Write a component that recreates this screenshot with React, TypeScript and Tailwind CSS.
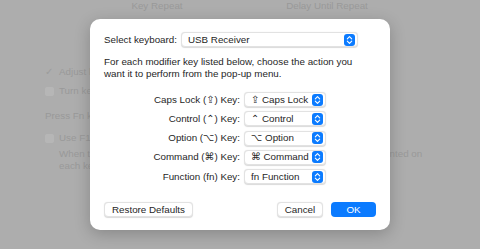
import React from 'react';

const font = { fontFamily: '"Liberation Sans", "DejaVu Sans", sans-serif' };

function Stepper({ h = 12 }: { h?: number }) {
  return (
    <svg width="11" height={h} viewBox={`0 0 11 ${h}`} className="shrink-0">
      <rect x="0" y="0" width="11" height={h} rx="3" fill="#0b7bff" />
      <path
        d={`M3.3 ${h / 2 - 1.2} L5.5 ${h / 2 - 3.4} L7.7 ${h / 2 - 1.2} M3.3 ${h / 2 + 1.2} L5.5 ${h / 2 + 3.4} L7.7 ${h / 2 + 1.2}`}
        fill="none"
        stroke="white"
        strokeWidth="1.1"
        strokeLinecap="round"
        strokeLinejoin="round"
      />
    </svg>
  );
}

function Popup({ label, width }: { label: string; width: string }) {
  return (
    <div
      className={`${width} h-[15px] flex items-center justify-between pl-[6px] pr-[2px] bg-white rounded-[4px] border border-[#e2e2e2] shadow-[0_0.5px_1px_rgba(0,0,0,0.15)] text-[#262626]`}
    >
      <span className="leading-[12px]">{label}</span>
      <Stepper />
    </div>
  );
}

const modifiers = [
  { key: 'Caps Lock (⇪) Key:', value: '⇪ Caps Lock' },
  { key: 'Control (⌃) Key:', value: '⌃ Control' },
  { key: 'Option (⌥) Key:', value: '⌥ Option' },
  { key: 'Command (⌘) Key:', value: '⌘ Command' },
  { key: 'Function (fn) Key:', value: 'fn Function' },
];

export default function App() {
  return (
    <div
      className="relative w-[480px] h-[249px] overflow-hidden bg-[#adadad] text-[9.8px] leading-[12px] text-[#999999]"
      style={font}
    >
      {/* dimmed settings window behind the sheet */}
      <div className="flex pt-[0px] pl-[97px] gap-[50px]">
        <div className="w-[120px] text-center">Key Repeat</div>
        <div className="w-[120px] text-center">Delay Until Repeat</div>
      </div>
      <div className="flex flex-col pl-[45px] pt-[53px]">
        <div className="flex items-center gap-[5px] h-[14px]">
          <span className="w-[9px] text-[10px] text-[#9c9c9c]">✓</span>
          <span>Adjust keyboard brightness in low light</span>
        </div>
        <div className="flex items-center gap-[5px] h-[14px] mt-[5px]">
          <span className="w-[9px] h-[9px] rounded-[2px] bg-[#b6b6b6]" />
          <span>Turn keyboard backlight off after 5 secs of inactivity</span>
        </div>
        <div className="h-[14px] mt-[11px] flex items-center">Press Fn key to Change Input Source</div>
        <div className="flex items-center gap-[5px] h-[14px] mt-[8px]">
          <span className="w-[9px] h-[9px] rounded-[2px] bg-[#b6b6b6]" />
          <span>Use F1, F2, etc. keys as standard function keys</span>
        </div>
        <div className="pl-[14px] mt-[3px] w-[420px]">
          When this option is selected, press the Fn key to use the special features printed on
          <br />
          each key.
        </div>
      </div>

      {/* sheet */}
      <div className="absolute left-[90px] top-[19px] w-[300px] h-[211px] bg-white rounded-[10px] shadow-[0_4px_16px_rgba(0,0,0,0.22)] flex flex-col px-[14px] pt-[13px] pb-[13px] text-[#262626]">
        <div className="flex items-center gap-[4px]">
          <span>Select keyboard:</span>
          <Popup label="USB Receiver" width="w-[177px]" />
        </div>

        <p className="mt-[9px]">
          For each modifier key listed below, choose the action you
          <br />
          want it to perform from the pop-up menu.
        </p>

        <div className="mt-[12px] flex flex-col gap-[4.3px]">
          {modifiers.map((m) => (
            <div key={m.key} className="flex items-center gap-[4px]">
              <span className="w-[136px] text-right">{m.key}</span>
              <Popup label={m.value} width="w-[82px]" />
            </div>
          ))}
        </div>

        <div className="mt-auto flex items-center">
          <button className="w-[89px] h-[15px] leading-[12px] rounded-[4px] bg-white border border-[#e2e2e2] shadow-[0_0.5px_1px_rgba(0,0,0,0.15)] text-[#262626]">
            Restore Defaults
          </button>
          <div className="flex-1" />
          <button className="w-[46px] h-[15px] leading-[12px] rounded-[4px] bg-white border border-[#e2e2e2] shadow-[0_0.5px_1px_rgba(0,0,0,0.15)] text-[#262626]">
            Cancel
          </button>
          <button className="ml-[8px] w-[45px] h-[15px] leading-[12px] rounded-[4px] bg-[#0b7bff] text-white font-medium">
            OK
          </button>
        </div>
      </div>
    </div>
  );
}
